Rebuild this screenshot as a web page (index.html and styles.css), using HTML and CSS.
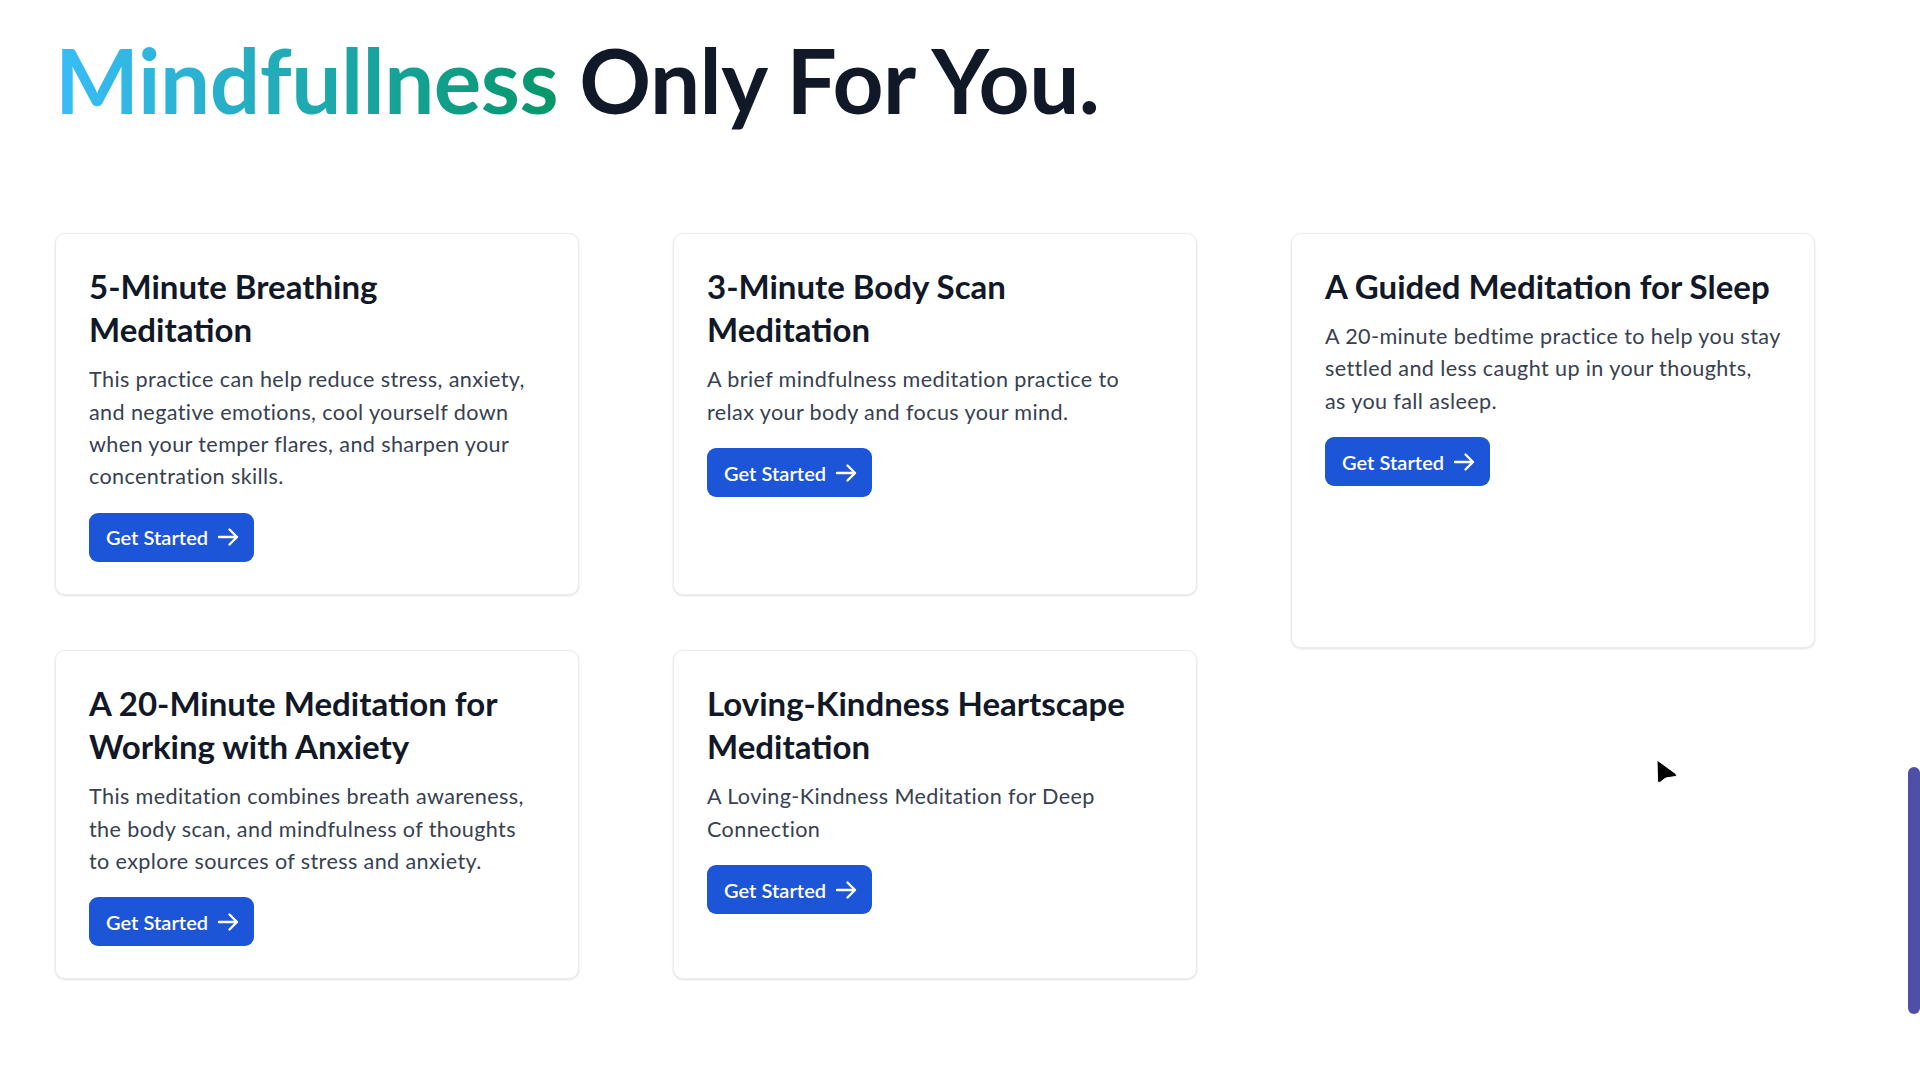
FILE: index.html
```html
<!DOCTYPE html>
<html lang="en">
<head>
<meta charset="utf-8">
<title>Mindfullness Only For You.</title>
<link rel="stylesheet" href="styles.css">
</head>
<body>
<main class="page">
  <h1 class="hero"><span class="grad">Mindfullness</span> Only For You.</h1>

  <section class="cards">
    <article class="card">
      <h2 class="card-title">5-Minute Breathing Meditation</h2>
      <p class="card-text">This practice can help reduce stress, anxiety,<br> and negative emotions, cool yourself down<br> when your temper flares, and sharpen your<br> concentration skills.</p>
      <a class="btn" href="#">Get Started <svg class="arrow" viewBox="0 0 24 24" fill="none" stroke="currentColor" stroke-width="2.4" stroke-linecap="round" stroke-linejoin="round"><path d="M13.5 4.5 21 12l-7.5 7.5M21 12H3"/></svg></a>
    </article>

    <article class="card">
      <h2 class="card-title">3-Minute Body Scan Meditation</h2>
      <p class="card-text">A brief mindfulness meditation practice to<br> relax your body and focus your mind.</p>
      <a class="btn" href="#">Get Started <svg class="arrow" viewBox="0 0 24 24" fill="none" stroke="currentColor" stroke-width="2.4" stroke-linecap="round" stroke-linejoin="round"><path d="M13.5 4.5 21 12l-7.5 7.5M21 12H3"/></svg></a>
    </article>

    <article class="card card-tall">
      <h2 class="card-title">A Guided Meditation for Sleep</h2>
      <p class="card-text">A 20-minute bedtime practice to help you stay<br> settled and less caught up in your thoughts,<br> as you fall asleep.</p>
      <a class="btn" href="#">Get Started <svg class="arrow" viewBox="0 0 24 24" fill="none" stroke="currentColor" stroke-width="2.4" stroke-linecap="round" stroke-linejoin="round"><path d="M13.5 4.5 21 12l-7.5 7.5M21 12H3"/></svg></a>
    </article>

    <article class="card">
      <h2 class="card-title">A 20-Minute Meditation for Working with Anxiety</h2>
      <p class="card-text">This meditation combines breath awareness,<br> the body scan, and mindfulness of thoughts<br> to explore sources of stress and anxiety.</p>
      <a class="btn" href="#">Get Started <svg class="arrow" viewBox="0 0 24 24" fill="none" stroke="currentColor" stroke-width="2.4" stroke-linecap="round" stroke-linejoin="round"><path d="M13.5 4.5 21 12l-7.5 7.5M21 12H3"/></svg></a>
    </article>

    <article class="card">
      <h2 class="card-title">Loving-Kindness Heartscape Meditation</h2>
      <p class="card-text">A Loving-Kindness Meditation for Deep<br> Connection</p>
      <a class="btn" href="#">Get Started <svg class="arrow" viewBox="0 0 24 24" fill="none" stroke="currentColor" stroke-width="2.4" stroke-linecap="round" stroke-linejoin="round"><path d="M13.5 4.5 21 12l-7.5 7.5M21 12H3"/></svg></a>
    </article>
  </section>
</main>

<div class="scroll-thumb"></div>
<svg class="cursor" width="24" height="28" viewBox="0 0 24 28"><path d="M1 1 L1.5 22 Q2 24.5 4.5 23 L9 19.5 Q11 18.5 13 18.5 L19.5 17.5 Q21.5 16.5 19.5 14.5 Z" fill="#000" stroke="#fff" stroke-width="1"/></svg>
</body>
</html>
```

FILE: styles.css
```css
* { box-sizing: border-box; }

html, body {
  margin: 0;
  padding: 0;
  background: #ffffff;
}

body {
  font-family: "Lato", "Noto Sans", "Liberation Sans", sans-serif;
  color: #111827;
  overflow: hidden;
}

.page {
  padding: 27px 55px 80px 55px;
}

.hero {
  margin: 0 0 99px 0;
  font-size: 89px;
  line-height: 1.2;
  font-weight: 700;
  color: #111827;
  letter-spacing: -0.5px;
}

.grad {
  background: linear-gradient(90deg, #38bdf8 0%, #059669 100%);
  -webkit-background-clip: text;
  background-clip: text;
  color: transparent;
}

.cards {
  display: grid;
  grid-template-columns: repeat(3, 524px);
  column-gap: 94px;
  row-gap: 55px;
  align-items: stretch;
}

.card {
  background: #ffffff;
  border: 1px solid #ebecee;
  border-radius: 10px;
  box-shadow: 0 1px 3px rgba(0, 0, 0, 0.08), 0 1px 2px rgba(0, 0, 0, 0.05);
  padding: 31px 36px 32px 33px;
}

.card-tall {
  align-self: start;
  min-height: 415px;
  margin-bottom: -53px;
}

.card-title {
  margin: 0;
  font-size: 33px;
  line-height: 43.2px;
  font-weight: 700;
  color: #111827;
}

.card-text {
  margin: 12px -14px 0 0;
  font-size: 21.6px;
  line-height: 32.4px;
  letter-spacing: 0.38px;
  color: #374151;
}

.btn {
  display: inline-flex;
  align-items: center;
  gap: 8px;
  margin-top: 20px;
  height: 49px;
  padding: 0 14px 0 17px;
  background: #1d55d8;
  color: #ffffff;
  border-radius: 9px;
  font-size: 20px;
  font-weight: 600;
  letter-spacing: 0.05px;
  text-decoration: none;
}

.arrow {
  width: 24px;
  height: 24px;
}

.scroll-thumb {
  position: fixed;
  top: 767px;
  right: 0;
  width: 12px;
  height: 247px;
  background: #4e4fa7;
  border-radius: 6px;
}

.cursor {
  position: fixed;
  left: 1656px;
  top: 759px;
}
```
